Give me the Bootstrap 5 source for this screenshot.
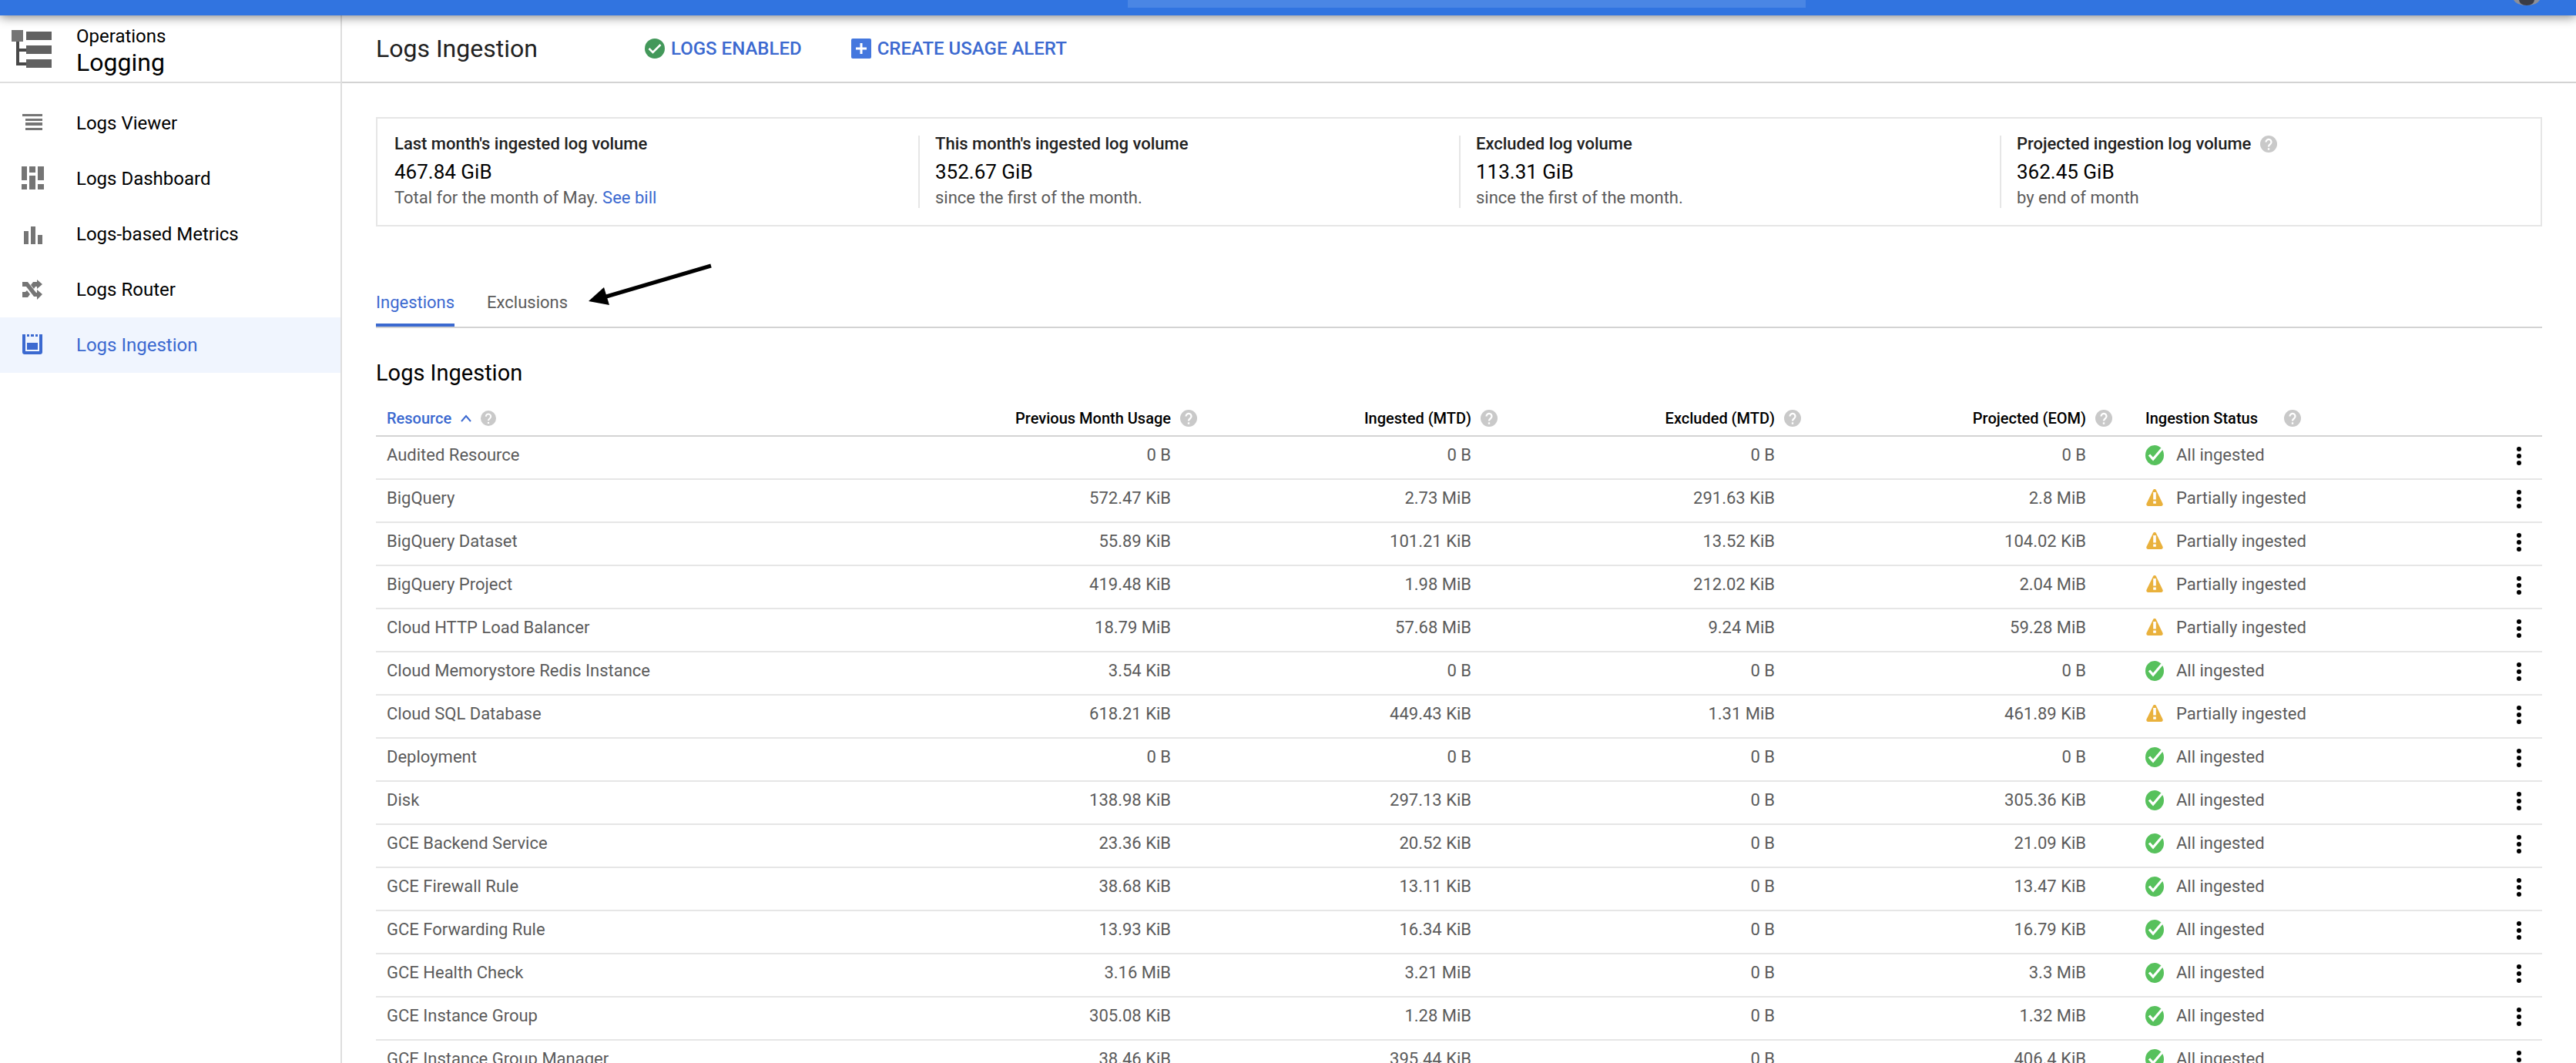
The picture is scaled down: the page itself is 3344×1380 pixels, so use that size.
<!DOCTYPE html>
<html lang="en">
<head>
<meta charset="utf-8">
<title>Logs Ingestion</title>
<link rel="stylesheet" href="https://cdn.jsdelivr.net/npm/bootstrap@5.3.0/dist/css/bootstrap.min.css">
<style>
:root { --ink:#212121; --soft:#5b5b5b; --link:#3b69d0; --line:#e6e6e6; --line-strong:#d3d3d3; }
body { font-family:Roboto,"Liberation Sans",sans-serif; font-size:22px; line-height:28px; color:var(--soft); background:#fff; }
a { color:var(--link); text-decoration:none; }
svg { display:block; flex:none; }
.topbar { height:20px; background:#3174e0; box-shadow:0 2px 14px rgba(0,0,0,.5); z-index:5; }
.search-strip { width:880px; height:10px; margin-left:1464px; background:#4a86e4; }
.avatar { width:34px; height:7px; margin-right:47px; }
.shell { height:calc(100vh - 20px); overflow:hidden; }
.sidebar { width:444px; border-right:2px solid #dedede; }
.side-head { height:88px; border-bottom:2px solid #dedede; padding:12px 14px 0; gap:31px; color:#000; }
.side-head svg { margin-top:6px; }
.product { font-size:32px; line-height:38px; }
.group { font-size:24px; line-height:30px; }
.side-nav { padding-top:16px; }
.side-nav .nav-link { height:72px; padding:0 26px; gap:41px; font-size:24px; color:#000; border-radius:0; }
.side-nav .nav-link svg { width:32px; height:32px; fill:#757575; }
.side-nav .nav-link.active { background:#f0f5fe; color:var(--link); }
.side-nav .nav-link.active svg { fill:var(--link); }
.page-head { height:88px; border-bottom:2px solid var(--line-strong); padding:0 44px; }
.page-head h1 { font-size:32px; line-height:40px; color:var(--ink); font-weight:400; width:349px; }
.page-head .btn { font-size:24px; line-height:28px; font-weight:500; color:var(--link); gap:8px; }
.content { padding:44px 44px 0; }
.summary { border:2px solid var(--line); padding:22px 0; }
.stat { height:94px; border-left:2px solid var(--line); padding-left:20px; }
.stat:first-child { border-color:transparent; }
.stat-label { line-height:22px; font-weight:500; color:var(--ink); gap:12px; }
.stat-value { font-size:26px; line-height:30px; color:#000; margin:10px 0 6px; }
.stat-note { line-height:26px; }
.tabs { margin-top:70px; gap:42px; border-bottom:2px solid var(--line-strong); position:relative; }
.tabs .nav-link { height:60px; padding:15px 0 0; color:var(--soft); border-bottom:4px solid transparent; border-radius:0; }
.tabs .nav-link.active { color:var(--link); border-color:var(--link); }
.pointer { position:absolute; left:274px; top:-24px; }
.section-title { font-size:29px; line-height:36px; color:#000; font-weight:400; margin:40px 0 0; }
.usage { table-layout:fixed; width:100%; margin-top:18px; }
.usage th { height:46px; padding:0 6px 0 14px; font-size:20px; font-weight:500; color:#000; border-bottom:2px solid var(--line-strong); }
.usage td { padding:10px 40px 16px 14px; border-bottom:2px solid var(--line); height:56px; }
.usage .state { padding-left:37px; }
.usage .more { padding:0 16px 0 0; }
.th-in { gap:12px; }
.th-wide { gap:34px; }
.more button { padding:0 10px 4px; margin-left:auto; }
.status-in { gap:16px; }
</style>
</head>
<body>
<svg width="0" height="0" class="position-absolute" aria-hidden="true">
<defs>
<symbol id="help" viewBox="0 0 24 24"><circle cx="12" cy="12" r="12" fill="#c9c9c9"/><path d="M8.200 9.200a3.800 3.800 0 1 1 6 3.100c-1.400 1-2.200 1.700-2.200 3.400" fill="none" stroke="#fff" stroke-width="2.500"/><rect x="10.700" y="17.800" width="2.600" height="2.600" fill="#fff"/></symbol>
<symbol id="ok" viewBox="0 0 24 26"><ellipse cx="12" cy="13" rx="12" ry="13" fill="#57c15c"/><path d="M5 12.500l5 5.500L21.500 4.500" fill="none" stroke="#fff" stroke-width="3.200"/></symbol>
<symbol id="warn" viewBox="0 0 24 26"><path d="M12 1c1 0 1.600.5 2.100 1.400l8.300 17c.8 1.900.1 3.600-1.900 3.600h-17c-2 0-2.700-1.700-1.900-3.600l8.300-17C10.400 1.500 11 1 12 1z" fill="#e9b13c"/><path d="M10.200 5h3.600v9.500h-3.600zM10.200 16.500h3.600v3.200h-3.600z" fill="#fff"/></symbol>
<symbol id="dots" viewBox="0 0 8 26"><circle cx="4" cy="4" r="3"/><circle cx="4" cy="13" r="3"/><circle cx="4" cy="22" r="3"/></symbol>
</defs>
</svg>
<header class="topbar position-relative d-flex justify-content-between align-items-start">
<div class="search-strip"></div>
<svg class="avatar" viewBox="0 0 34 7"><path d="M0 0h34q-4 7-17 7T0 0z" fill="#8c8f99"/><path d="M7 0h20q-1 7-10 7T7 0z" fill="#3a3c47"/></svg>
</header>
<div class="shell d-flex">
<aside class="sidebar flex-shrink-0">
<div class="side-head d-flex">
<svg width="54" height="52" viewBox="0 0 54 52"><path d="M7 14h4v29h9v4H7z M11 25h9v4h-9z" fill="#484848"/><path d="M1 1h15v15H1z" fill="#757575"/><path d="M20 3h33v11H20zM20 21h33v11H20zM20 39h33v11H20z" fill="#616161"/></svg>
<div><div class="group">Operations</div><div class="product">Logging</div></div>
</div>
<nav class="side-nav nav flex-column">
<a class="nav-link d-flex align-items-center" href="#"><svg viewBox="0 0 32 32"><path d="M3 4h26v3H3zM7 10h22v3H7zM7 15h22v4H7zM7 22h22v3H7z"/></svg>Logs Viewer</a>
<a class="nav-link d-flex align-items-center" href="#"><svg viewBox="0 0 32 32"><path d="M2 0h7v18H2zM2 23h7v7H2zM12 0h8v8h-8zM12 12h8v18h-8zM23 0h8v18h-8zM23 23h8v7h-8z"/></svg>Logs Dashboard</a>
<a class="nav-link d-flex align-items-center" href="#"><svg viewBox="0 0 32 32"><path d="M5 12h6v17H5zM14 6h6v23h-6zM23 17h6v12h-6z"/></svg>Logs-based Metrics</a>
<a class="nav-link d-flex align-items-center" href="#"><svg viewBox="0 0 32 32"><path d="M3 6h7l11 14h1v-4l7 6-7 7v-4h-4L8 12H3zM22 3l7 6-7 6v-3h-2l-2 3-4-5 3-4h5zM3 19h4l2-2 4 5-3 4H3z"/></svg>Logs Router</a>
<a class="nav-link active d-flex align-items-center" href="#" aria-current="page"><svg viewBox="0 0 32 32"><path d="M3 2h4v22h18V2h4v23q0 3-3 3H6q-3 0-3-3zM9 2h3v3H9zM14 2h4v3h-4zM20 2h3v3h-3zM9 13h14v9H9z"/></svg>Logs Ingestion</a>
</nav>
</aside>
<main class="flex-grow-1">
<div class="page-head d-flex align-items-center">
<h1 class="m-0">Logs Ingestion</h1>
<button type="button" class="btn border-0 p-0 me-5 d-flex align-items-center"><svg width="26" height="26" viewBox="0 0 26 26"><circle cx="13" cy="13" r="13" fill="#43985a"/><path d="M5.500 13l5 5L20.500 8" fill="none" stroke="#fff" stroke-width="2.500"/></svg>LOGS ENABLED</button>
<button type="button" class="btn border-0 p-0 ms-3 d-flex align-items-center"><svg width="26" height="26" viewBox="0 0 26 26"><rect width="26" height="26" rx="2" fill="#4477de"/><path d="M13 6v14M6 13h14" stroke="#fff" stroke-width="3"/></svg>CREATE USAGE ALERT</button>
</div>
<div class="content">
<section class="summary"><div class="row g-0">
<div class="col stat"><div class="stat-label">Last month's ingested log volume</div><div class="stat-value">467.84 GiB</div><div class="stat-note">Total for the month of May. <a href="#">See bill</a></div></div>
<div class="col stat"><div class="stat-label">This month's ingested log volume</div><div class="stat-value">352.67 GiB</div><div class="stat-note">since the first of the month.</div></div>
<div class="col stat"><div class="stat-label">Excluded log volume</div><div class="stat-value">113.31 GiB</div><div class="stat-note">since the first of the month.</div></div>
<div class="col stat"><div class="stat-label d-flex align-items-center">Projected ingestion log volume <svg width="22" height="22"><use href="#help"/></svg></div><div class="stat-value">362.45 GiB</div><div class="stat-note">by end of month</div></div>
</div></section>
<nav class="tabs nav">
<a class="nav-link active" href="#" aria-current="page">Ingestions</a><a class="nav-link" href="#">Exclusions</a>
<svg class="pointer" width="164" height="60" viewBox="0 0 164 60"><path d="M161 5L25 45" stroke="#000" stroke-width="5"/><path d="M2 51L22 33l7 23z"/></svg>
</nav>
<h2 class="section-title">Logs Ingestion</h2>
<table class="usage">
<colgroup><col><col style="width:372px"><col style="width:390px"><col style="width:394px"><col style="width:404px"><col style="width:484px"><col style="width:68px"></colgroup>
<thead><tr>
<th scope="col"><div class="th-in d-flex align-items-center"><a href="#">Resource</a><svg width="14" height="10" viewBox="0 0 14 10"><path d="M1 9l6-7 6 7" fill="none" stroke="#3b69d0" stroke-width="2"/></svg><svg width="20" height="22"><use href="#help"/></svg></div></th>
<th scope="col"><div class="th-in d-flex align-items-center justify-content-end">Previous Month Usage<svg width="22" height="22"><use href="#help"/></svg></div></th>
<th scope="col"><div class="th-in d-flex align-items-center justify-content-end">Ingested (MTD)<svg width="22" height="22"><use href="#help"/></svg></div></th>
<th scope="col"><div class="th-in d-flex align-items-center justify-content-end">Excluded (MTD)<svg width="22" height="22"><use href="#help"/></svg></div></th>
<th scope="col"><div class="th-in d-flex align-items-center justify-content-end">Projected (EOM)<svg width="22" height="22"><use href="#help"/></svg></div></th>
<th scope="col" class="state"><div class="th-wide d-flex align-items-center">Ingestion Status<svg width="22" height="22"><use href="#help"/></svg></div></th>
<th></th>
</tr></thead>
<tbody id="rows"></tbody>
</table>
</div>
</main>
</div>
<script src="https://cdn.jsdelivr.net/npm/bootstrap@5.3.0/dist/js/bootstrap.bundle.min.js"></script>
<script>
const data = [
["Audited Resource","0 B","0 B","0 B","0 B",1],
["BigQuery","572.47 KiB","2.73 MiB","291.63 KiB","2.8 MiB",0],
["BigQuery Dataset","55.89 KiB","101.21 KiB","13.52 KiB","104.02 KiB",0],
["BigQuery Project","419.48 KiB","1.98 MiB","212.02 KiB","2.04 MiB",0],
["Cloud HTTP Load Balancer","18.79 MiB","57.68 MiB","9.24 MiB","59.28 MiB",0],
["Cloud Memorystore Redis Instance","3.54 KiB","0 B","0 B","0 B",1],
["Cloud SQL Database","618.21 KiB","449.43 KiB","1.31 MiB","461.89 KiB",0],
["Deployment","0 B","0 B","0 B","0 B",1],
["Disk","138.98 KiB","297.13 KiB","0 B","305.36 KiB",1],
["GCE Backend Service","23.36 KiB","20.52 KiB","0 B","21.09 KiB",1],
["GCE Firewall Rule","38.68 KiB","13.11 KiB","0 B","13.47 KiB",1],
["GCE Forwarding Rule","13.93 KiB","16.34 KiB","0 B","16.79 KiB",1],
["GCE Health Check","3.16 MiB","3.21 MiB","0 B","3.3 MiB",1],
["GCE Instance Group","305.08 KiB","1.28 MiB","0 B","1.32 MiB",1],
["GCE Instance Group Manager","38.46 KiB","395.44 KiB","0 B","406.4 KiB",1]
];
document.getElementById("rows").innerHTML = data.map(r => `<tr><td>${r[0]}</td>${r.slice(1,5).map(v => `<td class="text-end">${v}</td>`).join("")}<td class="state"><div class="status-in d-flex align-items-center"><svg width="24" height="26"><use href="#${r[5] ? "ok" : "warn"}"/></svg>${r[5] ? "All" : "Partially"} ingested</div></td><td class="more"><button type="button" class="btn border-0 d-block" aria-label="More actions for ${r[0]}"><svg width="8" height="26"><use href="#dots"/></svg></button></td></tr>`).join("");
</script>
</body>
</html>
